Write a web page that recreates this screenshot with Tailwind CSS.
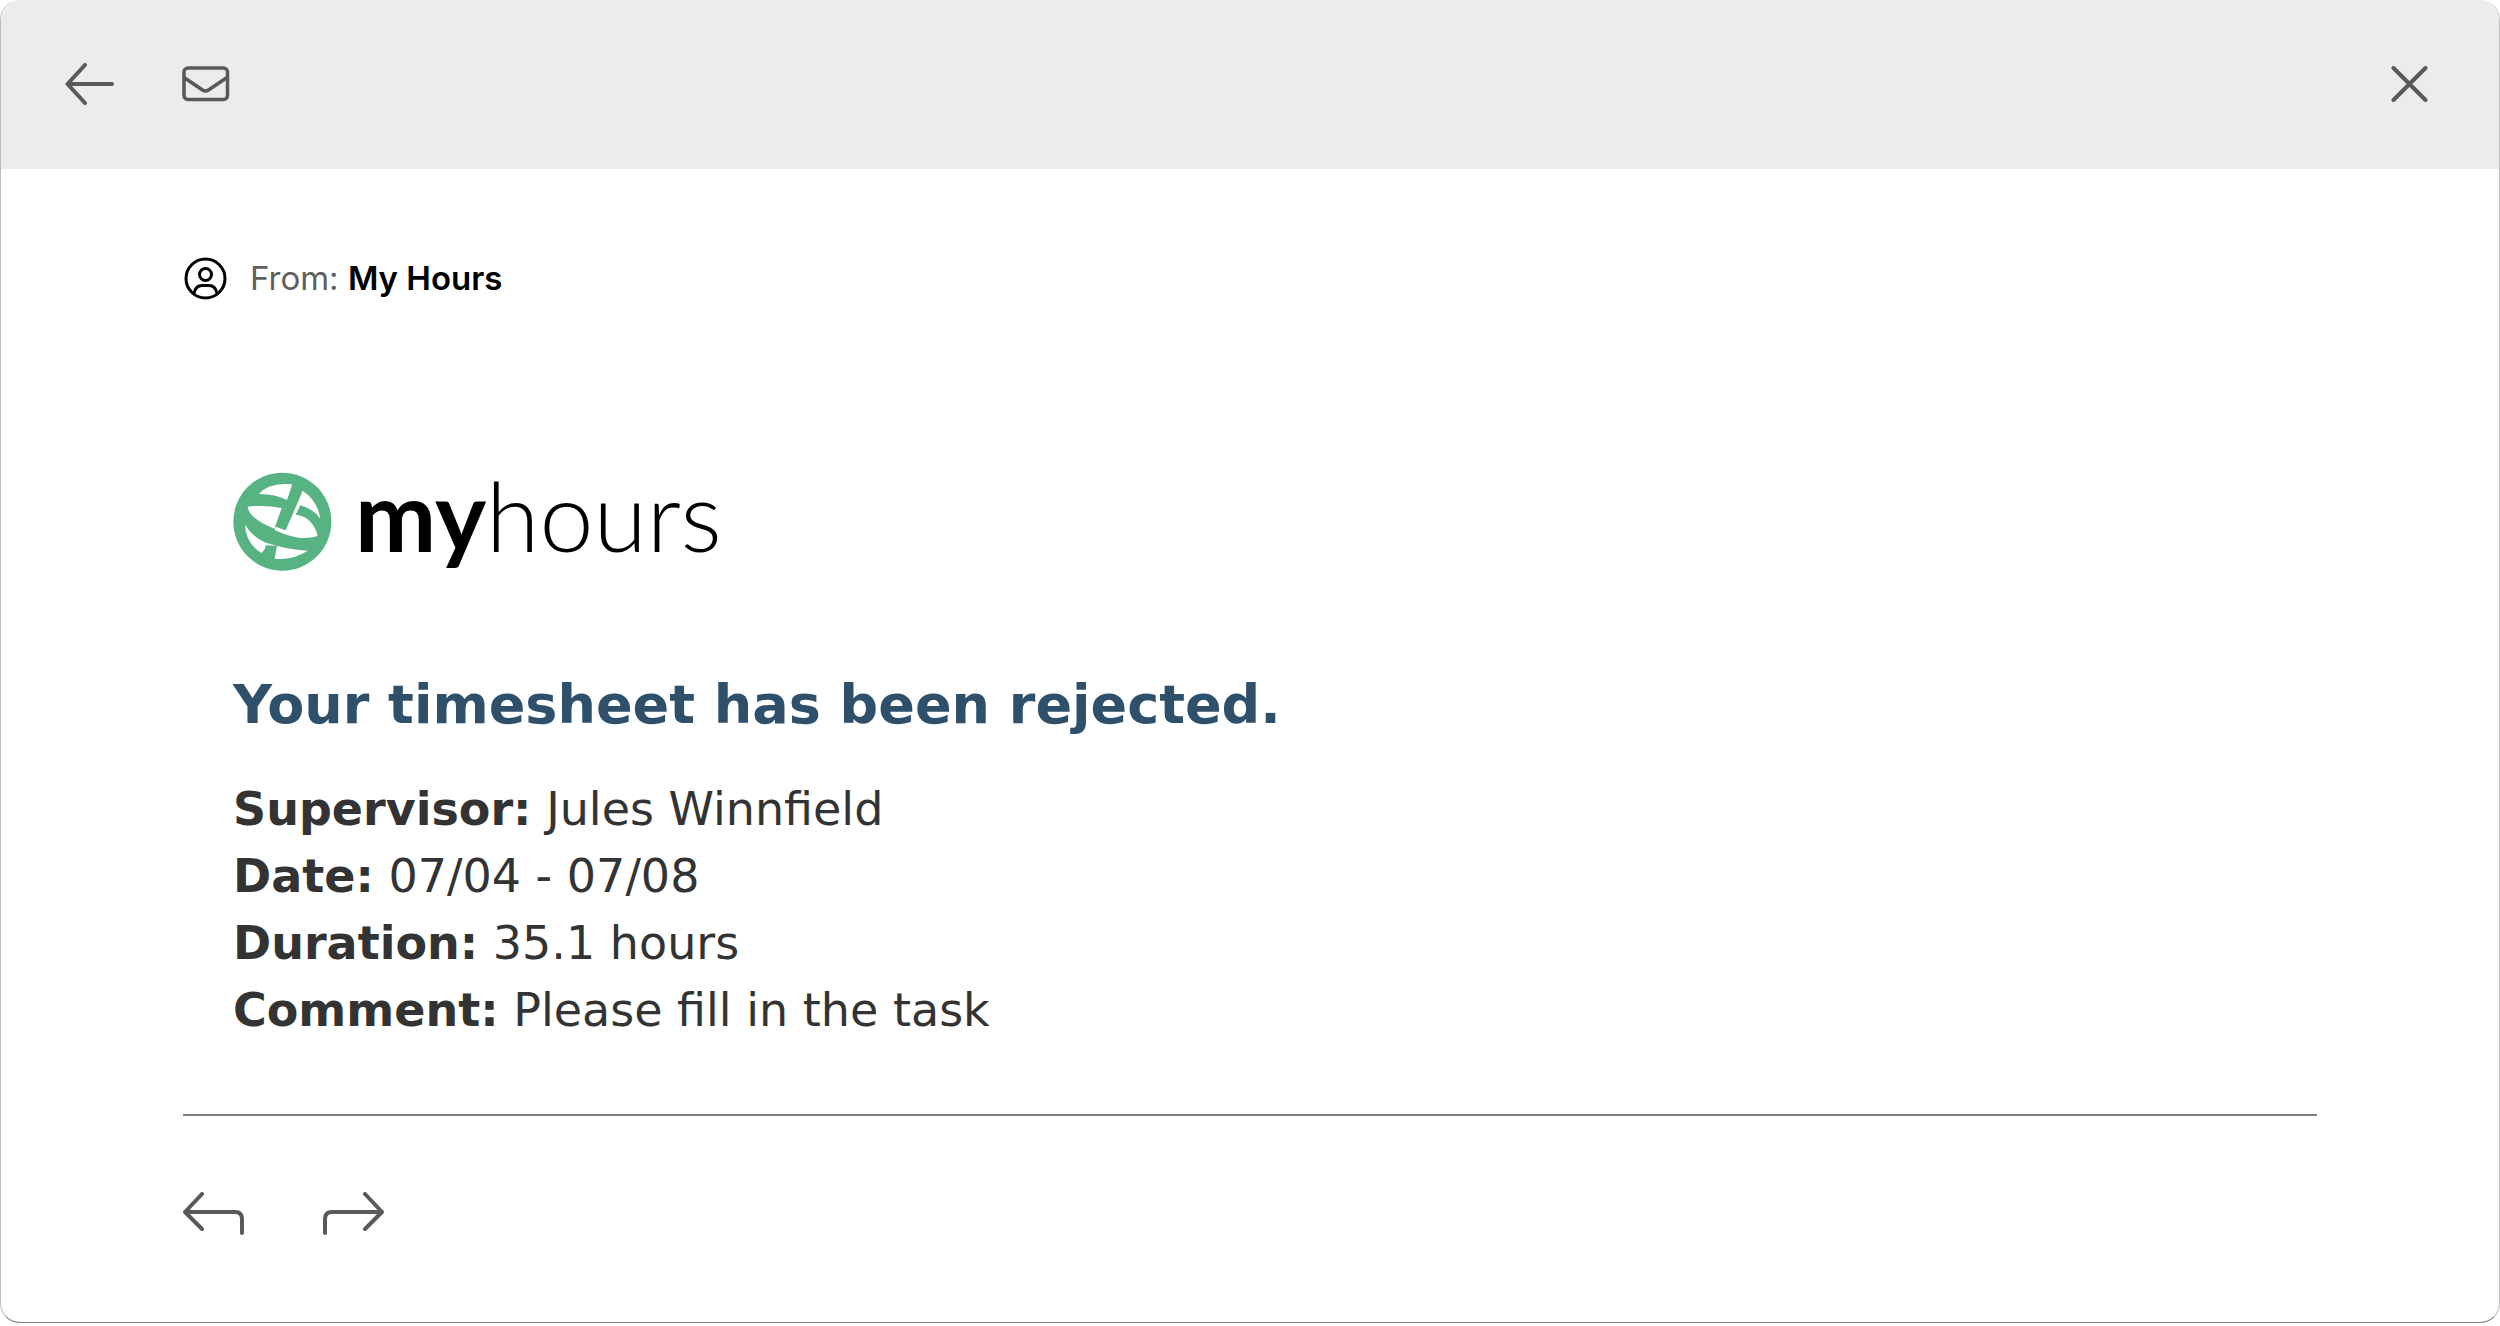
<!DOCTYPE html>
<html lang="en">
<head>
<meta charset="utf-8">
<meta name="viewport" content="width=device-width, initial-scale=1">
<title>My Hours – Your timesheet has been rejected</title>
<script src="https://cdn.jsdelivr.net/npm/@tailwindcss/browser@4"></script>
</head>
<body class="bg-white font-['Inter',sans-serif]">
<main class="overflow-hidden rounded-[20px] border border-t-0 border-[#bdbdbd] border-b-[#808080] bg-white">
  <header class="-mx-px flex h-[169px] items-center bg-[#ececec] pr-[72px] pb-[2px] pl-[65px] text-[#595959]">
    <button type="button" aria-label="Back" class="mr-[68px]">
      <svg class="block h-[42px] w-[49px]" viewBox="0 0 49 42" fill="none" stroke="currentColor" stroke-width="4" stroke-linecap="round" stroke-linejoin="round"><path d="M20 2 2.500 21 20 40M3 21H47"/></svg>
    </button>
    <button type="button" aria-label="Mark as unread">
      <svg class="block h-[36px] w-[48px]" viewBox="0 0 48 36" fill="none" stroke="currentColor" stroke-width="3.500" stroke-linejoin="round"><rect x="2" y="2" width="43.500" height="31.500" rx="4"/><path d="M2 11.500 20.500 24Q23.500 26 26.500 24L45 11.500"/></svg>
    </button>
    <button type="button" aria-label="Close" class="ml-auto">
      <svg class="block h-[36px] w-[37px]" viewBox="0 0 37 36" fill="none" stroke="currentColor" stroke-width="4" stroke-linecap="round"><path d="M2.500 2 34.500 34M34.500 2 2.500 34"/></svg>
    </button>
  </header>

  <div class="px-[182px]">
    <div class="flex items-center gap-[23px] pt-[87px]">
      <svg class="block size-[44px] shrink-0" viewBox="-1 -1 44 44" fill="none" stroke="#000" stroke-width="3" aria-hidden="true"><circle cx="21.500" cy="21.500" r="19.500"/><circle cx="21.500" cy="17.500" r="6"/><path d="M10 36.500Q11.500 28.500 18 28.500H25Q31.500 28.500 33 36.500"/></svg>
      <p class="text-[33px] leading-[44px] text-[#5f5f5f]">From: <span class="font-semibold text-black">My Hours</span></p>
    </div>

    <article class="px-[50px] pt-[172px] font-['DejaVu_Sans',Verdana,sans-serif]">
      <div class="flex h-[100px] items-start gap-[22px]">
        <svg class="block size-[100px] shrink-0" viewBox="22 20 300 300" aria-hidden="true">
          <circle cx="170" cy="169" r="147" fill="#58b382"/>
          <g fill="#fff">
            <path d="M100 86Q130 50 200 57L184 104Q150 86 100 86Z"/>
            <path d="M231 76Q276 106 284 160Q262 130 224 120L210 148Q260 154 276 210Q272 218 225 218Q190 214 147 194L149 184L180 195L216 112Z"/>
            <path d="M66 124Q120 118 168 128L146 190Q70 160 66 124Z"/>
            <path d="M58 177Q78 214 120 232L154 241L147 280Q200 286 246 256Q190 252 153 241L120 240L118 250L108 263Q60 236 58 177Z"/>
          </g>
        </svg>
        <p class="font-['Lato',sans-serif] text-[97px] leading-[86px] font-light text-black"><span class="font-bold">my</span>hours</p>
      </div>
      <h1 class="pt-[98px] text-[54px] leading-[70px] font-bold text-[#2f506b]">Your timesheet has been rejected.</h1>
      <div class="pt-[36px] text-[46px] leading-[67px] text-[#333]">
        <p><strong>Supervisor:</strong> Jules Winnfield</p>
        <p><strong>Date:</strong> 07/04 - 07/08</p>
        <p><strong>Duration:</strong> 35.1 hours</p>
        <p><strong>Comment:</strong> Please fill in the task</p>
      </div>
    </article>

    <footer class="mt-[70px] flex gap-[78px] border-t-2 border-[#808080] pt-[76px] pb-[86px] text-[#595959]">
      <button type="button" aria-label="Reply">
        <svg class="block h-[44px] w-[62px]" viewBox="0 0 62 44" fill="none" stroke="currentColor" stroke-width="4" stroke-linecap="round" stroke-linejoin="round"><path d="M19 2 2 20 19 37M2 20H52Q59 20 59 27V41"/></svg>
      </button>
      <button type="button" aria-label="Forward">
        <svg class="block h-[44px] w-[62px]" viewBox="0 0 62 44" fill="none" stroke="currentColor" stroke-width="4" stroke-linecap="round" stroke-linejoin="round"><path d="M42 2 59 20 42 37M59 20H9Q2 20 2 27V41"/></svg>
      </button>
    </footer>
  </div>
</main>
</body>
</html>
